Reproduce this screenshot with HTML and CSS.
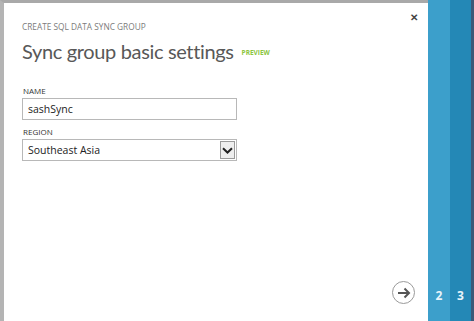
FILE: index.html
```html
<!DOCTYPE html>
<html>
<head>
    <meta charset="UTF-8">
    <title>Create SQL Data Sync Group</title>
    <link rel="stylesheet" href="styles.css">
</head>
<body>
    <div class="wizard">
        <!-- Dialog -->
        <div class="panel">
            <div class="panel-top">
                <div class="panel-heading">
                    <div class="eyebrow">CREATE SQL DATA SYNC GROUP</div>
                    <div class="title-row">
                        <h1 class="title">Sync group basic settings</h1>
                        <span class="preview">PREVIEW</span>
                    </div>
                </div>
                <div class="close">&#x2715;</div>
            </div>

            <div class="form">
                <label class="field-label">NAME</label>
                <div class="text-input">sashSync</div>
                <label class="field-label">REGION</label>
                <div class="select">
                    <span>Southeast Asia</span>
                    <span class="select-btn">
                        <svg width="11" height="7" viewBox="0 0 11 7"><path d="M1 1.2 L5.5 5.5 L10 1.2" fill="none" stroke="#222" stroke-width="2"/></svg>
                    </span>
                </div>
            </div>

            <div class="panel-footer">
                <div class="next-btn">
                    <svg width="14" height="12" viewBox="0 0 14 12"><path d="M1 6 H12 M7.5 1.5 L12 6 L7.5 10.5" fill="none" stroke="#555" stroke-width="2"/></svg>
                </div>
            </div>
        </div>

        <!-- Steps -->
        <div class="step step-2"><span>2</span></div>
        <div class="step step-3"><span>3</span></div>
        <div class="edge"></div>
    </div>
</body>
</html>
```

FILE: styles.css
```css
/* Base */
body {
    margin: 0;
    font-family: "Open Sans", "Noto Sans", sans-serif;
    background-color: #ffffff;
}

.wizard {
    display: flex;
    height: 321px;
    width: 474px;
    overflow: hidden;
}

/* Dialog panel */
.panel {
    flex: 1;
    display: flex;
    flex-direction: column;
    background-color: #ffffff;
    border-top: 3px solid #a9a9a9;
    border-left: 4px solid #b4b4b4;
    box-sizing: border-box;
    padding: 0 13px 0 18px;
}

.panel-top {
    display: flex;
    justify-content: space-between;
}

.eyebrow {
    margin-top: 18px;
    font-size: 8.3px;
    color: #7b7b7b;
}

.title-row {
    display: flex;
    align-items: center;
    margin-top: 6px;
}

.title {
    margin: 0;
    font-family: Lato, "Open Sans", sans-serif;
    font-size: 20px;
    font-weight: normal;
    color: #585858;
    letter-spacing: -0.35px;
    line-height: 26px;
}

.preview {
    margin-left: 8px;
    margin-top: 3px;
    font-size: 6.5px;
    font-weight: bold;
    color: #8cc540;
}

.close {
    margin-top: 7px;
    margin-right: -3px;
    font-size: 10px;
    font-weight: bold;
    color: #444444;
}

/* Form */
.form {
    margin-top: 21px;
    width: 215px;
    display: flex;
    flex-direction: column;
}

.field-label {
    font-size: 8px;
    color: #333333;
    margin-left: 1px;
    margin-bottom: 2px;
}

.text-input, .select {
    height: 22px;
    box-sizing: border-box;
    border: 1px solid #b8b8b8;
    font-size: 10.5px;
    color: #222222;
    padding-left: 5px;
    display: flex;
    align-items: center;
    margin-bottom: 6px;
}

.select {
    justify-content: space-between;
    padding-right: 1px;
}

.select-btn {
    width: 15px;
    height: 18px;
    border: 1px solid #9a9a9a;
    background-color: #eeeeee;
    box-sizing: border-box;
    display: flex;
    align-items: center;
    justify-content: center;
}

/* Footer */
.panel-footer {
    margin-top: auto;
    display: flex;
    justify-content: flex-end;
    padding-bottom: 17px;
}

.next-btn {
    width: 21px;
    height: 21px;
    border: 1.5px solid #9a9a9a;
    border-radius: 50%;
    display: flex;
    align-items: center;
    justify-content: center;
    margin-right: 0;
}

/* Step columns */
.step {
    display: flex;
    align-items: flex-end;
    justify-content: center;
    color: #e8f4fa;
    font-size: 12px;
    font-weight: bold;
    padding-bottom: 17px;
    box-sizing: border-box;
}

.step-2 {
    width: 22px;
    background-color: #3c9fcb;
}

.step-3 {
    width: 21px;
    background-color: #2488b6;
}

.edge {
    width: 3px;
    background-color: #3c5a78;
}
```
